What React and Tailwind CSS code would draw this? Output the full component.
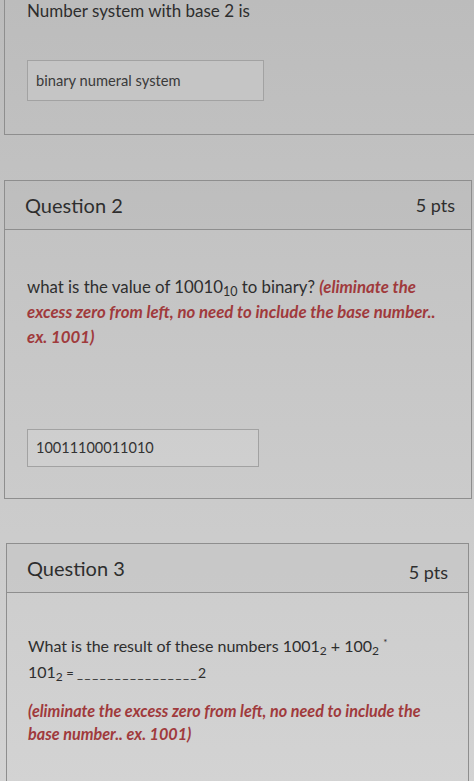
export default function App() {
  const red = "font-bold italic text-[#a03a3c]";

  return (
    <div className="min-h-screen w-[474px] overflow-hidden bg-linear-to-b from-[#bcbcbc] via-[#c8c8c8] to-[#d3d3d3] font-['Lato','Noto_Sans',sans-serif] text-[#2e2e2e]">
      {/* question 1, continued from above */}
      <div className="ml-[4px] -mr-4 border-b border-l border-[#8e8e8e] px-[22px] pb-[33px]">
        <p className="-mt-[1px] text-[17px] leading-[24px]">Number system with base 2 is</p>
        <div className="mt-[37px] flex h-[41px] w-[237px] items-center border border-[#a2a2a2] bg-white/10 pl-[8px] text-[14.7px] text-[#3a3a3a]">
          binary numeral system
        </div>
      </div>

      {/* question 2 */}
      <div className="mt-[45px] ml-[4px] mr-[2px] border border-[#8e8e8e]">
        <div className="flex h-[49px] items-center justify-between border-b border-[#8e8e8e] bg-black/[0.02] pl-[20px] pr-[16px]">
          <h2 className="text-[20px] leading-none">Question 2</h2>
          <span className="text-[18px] leading-none">5 pts</span>
        </div>
        <div className="px-[22px] pt-[44px] pb-[31px]">
          <p className="text-[16.8px] leading-[25px]">
            what is the value of 10010
            <sub className="text-[12.5px]">10</sub> to binary?{" "}
            <span className={red}>
              (eliminate the
              <br />
              excess zero from left, no need to include the base number..
              <br />
              ex. 1001)
            </span>
          </p>
          <div className="mt-[80px] flex h-[38px] w-[232px] items-center border border-[#a2a2a2] bg-white/10 pl-[8px] text-[14.5px] text-[#333]">
            10011100011010
          </div>
        </div>
      </div>

      {/* question 3 */}
      <div className="mt-[44px] ml-[6px] mr-[5px] border border-b-0 border-[#8e8e8e]">
        <div className="flex h-[49px] items-center justify-between border-b border-[#8e8e8e] bg-black/[0.02] pl-[20px] pr-[20px]">
          <h2 className="text-[20px] leading-none">Question 3</h2>
          <span className="mt-[8px] text-[18px] leading-none">5 pts</span>
        </div>
        <div className="px-[21px] pt-[36px] pb-[40px]">
          <p className="text-[16px] leading-[26px]">
            What is the result of these numbers 1001<sub className="text-[12px]">2</sub> + 100
            <sub className="text-[12px]">2</sub> <span className="align-super text-[10px]">*</span>
            <br />
            101<sub className="text-[12px]">2</sub>
            <span className="text-[13px]"> = </span>
            <span className="text-[13px] tracking-[1.6px]">________________</span>
            <span className="text-[14px]">2</span>
          </p>
          <p className={`mt-[13px] text-[16.2px] leading-[23px] ${red}`}>
            (eliminate the excess zero from left, no need to include the
            <br />
            base number.. ex. 1001)
          </p>
        </div>
      </div>
    </div>
  );
}
